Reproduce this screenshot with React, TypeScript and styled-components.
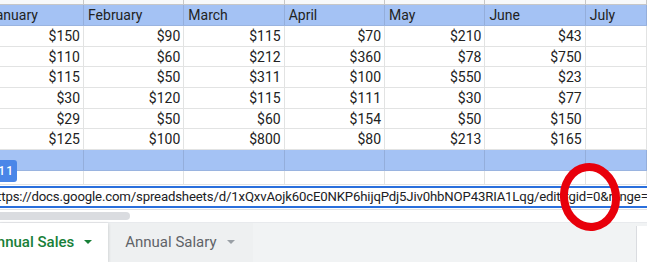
import styled, { createGlobalStyle } from 'styled-components';

const GlobalStyle = createGlobalStyle`
  html, body { margin: 0; padding: 0; background: #fff; overflow: hidden; }
  body { font-family: Roboto, "Liberation Sans", Arial, sans-serif; }
`;

/* ---------- dados ---------- */
const months = ['January', 'February', 'March', 'April', 'May', 'June', 'July'];

const rows: (number | null)[][] = [
  [150, 90, 115, 70, 210, 43, null],
  [110, 60, 212, 360, 78, 750, null],
  [115, 50, 311, 100, 550, 23, null],
  [30, 120, 115, 111, 30, 77, null],
  [29, 50, 60, 154, 50, 150, null],
  [125, 100, 800, 80, 213, 165, null],
];

const url =
  'https://docs.google.com/spreadsheets/d/1xQxvAojk60cE0NKP6hijqPdj5Jiv0hbNOP43RIA1Lqg/edit#gid=0&range=';

const cols = '84px repeat(5, 100.35px) 1fr';

/* ---------- layout ---------- */
const Screen = styled.div`
  position: relative;
  width: 647px;
  height: 262px;
  overflow: hidden;
  background: #fff;
  display: flex;
  flex-direction: column;
`;

const LetterStrip = styled.div`
  display: grid;
  grid-template-columns: ${cols};
  height: 4px;
  background: #f8f9fa;
  border-bottom: 1px solid #c7c7c7;
  & > div { border-right: 1px solid #c7c7c7; }
`;

type RowKind = 'header' | 'data' | 'band' | 'blank';

const Row = styled.div<{ $kind: RowKind }>`
  display: grid;
  grid-template-columns: ${cols};
  height: ${p => (p.$kind === 'header' ? '21px' : p.$kind === 'blank' ? '14px' : '20.7px')};
  background: ${p => (p.$kind === 'header' || p.$kind === 'band' ? '#a4c2f4' : '#fff')};
  border-bottom: 1px solid ${p => (p.$kind === 'header' || p.$kind === 'band' ? '#9ab4e0' : '#e2e3e3')};
  box-sizing: border-box;
`;

const Cell = styled.div<{ $align?: 'left' | 'right' }>`
  display: flex;
  align-items: center;
  justify-content: ${p => (p.$align === 'right' ? 'flex-end' : 'flex-start')};
  padding: ${p => (p.$align === 'right' ? '0 3px 0 0' : '0 0 0 4px')};
  border-right: 1px solid #e2e3e3;
  font-size: 14px;
  color: #222;
  white-space: nowrap;
  overflow: hidden;
  box-sizing: border-box;
`;

const HeaderCell = styled(Cell)`
  border-right-color: #94aedb;
`;

const CellText = styled.span<{ $shift?: number }>`
  margin-left: ${p => p.$shift ?? 0}px;
`;

const UrlBox = styled.div`
  height: 22px;
  margin-top: 1px;
  border: 2px solid #2a6fdc;
  border-left: none;
  border-right: none;
  box-sizing: border-box;
  display: flex;
  align-items: center;
  overflow: hidden;
  background: #fff;
`;

const UrlText = styled.span`
  margin-left: -10px;
  font-size: 13.2px;
  letter-spacing: -0.16px;
  color: #202124;
  white-space: nowrap;
`;

const ScrollTrack = styled.div`
  height: 12px;
  margin-top: 1px;
  border-top: 1px solid #e2e3e3;
  background: #fff;
  display: flex;
  align-items: center;
`;

const ScrollThumb = styled.div`
  width: 134px;
  height: 8px;
  margin-left: -4px;
  border-radius: 4px;
  background: #dadce0;
`;

const TabBar = styled.div`
  flex: 1;
  display: flex;
  background: #f1f3f4;
  border-top: 1px solid #e8eaed;
`;

const Tab = styled.div<{ $active?: boolean }>`
  display: flex;
  align-items: center;
  gap: 10px;
  padding: 0 ${p => (p.$active ? '16px' : '18px')} 0 ${p => (p.$active ? '0' : '17px')};
  background: ${p => (p.$active ? '#fff' : '#eef0f1')};
  color: ${p => (p.$active ? '#188038' : '#5f6368')};
  font-size: 15px;
  font-weight: ${p => (p.$active ? 500 : 400)};
  white-space: nowrap;
  overflow: hidden;
  box-shadow: ${p => (p.$active ? '0 1px 3px rgba(60,64,67,0.25)' : 'none')};
  z-index: ${p => (p.$active ? 1 : 0)};
`;

const TabLabel = styled.span<{ $shift?: number }>`
  margin-left: ${p => p.$shift ?? 0}px;
`;

const Caret = styled.span<{ $color: string }>`
  width: 0;
  height: 0;
  border-left: 4px solid transparent;
  border-right: 4px solid transparent;
  border-top: 4px solid ${p => p.$color};
`;

const Spacer = styled.div`
  flex: 1;
`;

const ExploreEdge = styled.div`
  width: 10px;
  margin-top: 3px;
  background: #fff;
  border-left: 1px solid #dadce0;
`;

/* ---------- sobreposições ---------- */
const RowBadge = styled.div`
  position: absolute;
  left: 0;
  top: 160px;
  width: 17px;
  height: 22px;
  background: #4a86e8;
  border-radius: 0 3px 3px 0;
  color: #fff;
  font-size: 12px;
  font-weight: 500;
  display: flex;
  align-items: center;
  justify-content: flex-end;
  padding-right: 3px;
  box-sizing: border-box;
  letter-spacing: 1px;
`;

const Mark = styled.svg`
  position: absolute;
  left: 554px;
  top: 158px;
`;

const Bezel = styled.svg`
  position: absolute;
  left: 0;
  bottom: 0;
`;

export default function App() {
  return (
    <>
      <GlobalStyle />
      <Screen>
        <LetterStrip>
          {months.map(m => <div key={m} />)}
        </LetterStrip>

        <Row $kind="header">
          {months.map((m, i) => (
            <HeaderCell key={m}>
              <CellText $shift={i === 0 ? -16 : 0}>{m}</CellText>
            </HeaderCell>
          ))}
        </Row>

        {rows.map((r, ri) => (
          <Row key={ri} $kind="data">
            {r.map((v, ci) => (
              <Cell key={ci} $align="right">
                {v === null ? '' : `$${v}`}
              </Cell>
            ))}
          </Row>
        ))}

        <Row $kind="band">
          {months.map(m => <HeaderCell key={m} />)}
        </Row>
        <Row $kind="blank">
          {months.map(m => <Cell key={m} />)}
        </Row>

        <UrlBox>
          <UrlText>{url}</UrlText>
        </UrlBox>

        <ScrollTrack>
          <ScrollThumb />
        </ScrollTrack>

        <TabBar>
          <Tab $active>
            <TabLabel $shift={-13}>Annual Sales</TabLabel>
            <Caret $color="#188038" />
          </Tab>
          <Tab>
            <TabLabel>Annual Salary</TabLabel>
            <Caret $color="#9aa0a6" />
          </Tab>
          <Spacer />
          <ExploreEdge />
        </TabBar>

        <RowBadge>11</RowBadge>

        <Mark width="74" height="84" viewBox="0 0 74 84">
          <ellipse
            cx="36"
            cy="39"
            rx="26"
            ry="30"
            fill="none"
            stroke="#e8000b"
            strokeWidth="8"
            transform="rotate(-8 36 39)"
          />
        </Mark>

        <Bezel width="40" height="14" viewBox="0 0 40 14">
          <path d="M0 0 C8 7 22 12 40 14 L0 14 Z" fill="#000" />
        </Bezel>
      </Screen>
    </>
  );
}
